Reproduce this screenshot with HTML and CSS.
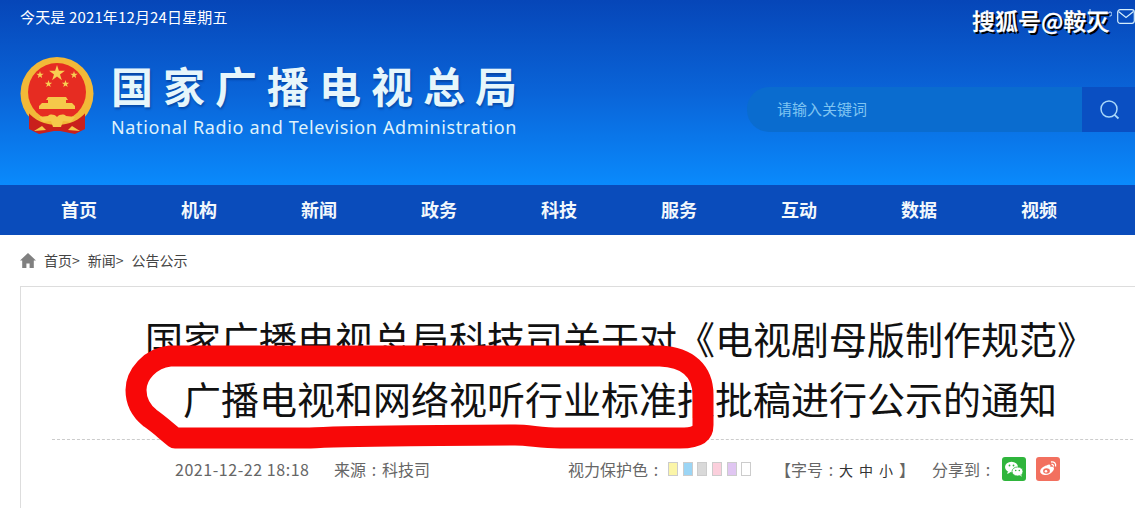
FILE: index.html
```html
<!DOCTYPE html>
<html lang="zh-CN">
<head>
  <meta charset="UTF-8">
  <title>国家广播电视总局</title>
  <link rel="stylesheet" href="styles.css">
</head>
<body>
  <div class="page">
    <header class="header">
      <div class="top-bar">
        <span class="date">今天是 2021年12月24日星期五</span>
        <div class="top-links">
          <svg class="top-mark" width="24" height="16" viewBox="0 0 24 16"><path d="M2 0v14M22 3a2 2 0 1 0 .1 0" fill="none" stroke="#cfeaff" stroke-width="1"/></svg>
          <svg class="mail-icon" width="18" height="15" viewBox="0 0 18 15"><rect x=".7" y=".7" width="16.6" height="13.6" rx="2.5" fill="none" stroke="#d5eefc" stroke-width="1.2"/><path d="M1.500 2.500 9 8.500l7.500-6" fill="none" stroke="#d5eefc" stroke-width="1.2"/></svg>
        </div>
      </div>
      <div class="header-main">
        <div class="logo">
          <svg class="emblem" width="74" height="78" viewBox="0 0 74 78">
            <circle cx="37" cy="36.500" r="36.500" fill="#f2b938"/>
            <circle cx="37" cy="35" r="29" fill="#e62c22"/>
            <path d="M37 8l1.900 5.800h6l-4.900 3.600 1.900 5.800-4.900-3.600-4.900 3.600 1.900-5.800-4.900-3.600h6z" fill="#f8cf52"/>
            <path d="M20 14l.9 2.700h2.800l-2.300 1.700.9 2.700-2.300-1.700-2.300 1.700.9-2.700-2.300-1.700h2.800zM54 14l.9 2.700h2.800l-2.300 1.700.9 2.700-2.300-1.700-2.300 1.700.9-2.700-2.300-1.700h2.800zM28.500 23l.9 2.700h2.800l-2.300 1.700.9 2.700-2.300-1.700-2.300 1.700.9-2.700-2.300-1.700h2.800zM45.500 23l.9 2.700h2.800l-2.300 1.700.9 2.700-2.300-1.700-2.300 1.700.9-2.700-2.300-1.700h2.800z" fill="#f8cf52"/>
            <path d="M28 40h18l2 3h-2v3h6l3 3v3H19v-3l3-3h6v-3h-2z" fill="#f5c94a"/>
            <path d="M9 54 22 62l15 4 15-4 13-8v18l-10 5-15-3h-6l-15 3-10-5z" fill="#c9201c"/>
            <path d="M9 50c6 8 17 13 28 13s22-5 28-13l2 4c-7 9-18 14-30 14S14 63 7 54z" fill="#f2b938"/>
            <path d="M37 60c3-3 7-3 9-1l9 1-4 5-8-1-2 6h-8l-2-6-8 1-4-5 9-1c2-2 6-2 9 1z" fill="#f5c94a"/>
            <path d="M14 74l8-5 4 4zM60 74l-8-5-4 4z" fill="#f5c94a"/>
          </svg>
          <div class="logo-text">
            <div class="logo-cn">国家广播电视总局</div>
            <div class="logo-en">National Radio and Television Administration</div>
          </div>
        </div>
        <form class="search">
          <input class="search-input" type="text" placeholder="请输入关键词">
          <div class="search-btn">
            <svg width="22" height="22" viewBox="0 0 22 22"><circle cx="10" cy="10" r="8" fill="none" stroke="#a9d8fa" stroke-width="1.500"/><path d="M15.500 15.800l4 3.700" stroke="#a9d8fa" stroke-width="1.800" fill="none"/></svg>
          </div>
        </form>
      </div>
      <div class="watermark">搜狐号@鞍灭</div>
    </header>

    <nav class="nav">
      <a>首页</a>
      <a>机构</a>
      <a>新闻</a>
      <a>政务</a>
      <a>科技</a>
      <a>服务</a>
      <a>互动</a>
      <a>数据</a>
      <a>视频</a>
    </nav>

    <div class="crumbs">
      <svg class="home-icon" width="16" height="15" viewBox="0 0 16 15"><path d="M8 0 0 7.500h2.200V15h4.200v-4.500h3.200V15h4.200V7.500H16z" fill="#808080"/></svg>
      <span>首页&gt;</span>
      <span>新闻&gt;</span>
      <span>公告公示</span>
    </div>

    <main class="card">
      <h1 class="title">国家广播电视总局科技司关于对《电视剧母版制作规范》<br>广播电视和网络视听行业标准报批稿进行公示的通知</h1>
      <div class="meta">
        <span class="meta-date">2021-12-22 18:18</span>
        <span class="meta-source">来源<span class="colon">:</span>科技司</span>
        <span class="meta-eye">视力保护色<span class="colon">:</span></span>
        <div class="swatches">
          <i class="swatch yellow"></i>
          <i class="swatch blue"></i>
          <i class="swatch gray"></i>
          <i class="swatch pink"></i>
          <i class="swatch purple"></i>
          <i class="swatch white"></i>
        </div>
        <span class="meta-size">【字号<span class="colon">:</span><b>大</b><b>中</b><b>小</b>】</span>
        <span class="meta-share">分享到<span class="colon">:</span></span>
        <a class="share wechat">
          <svg width="24" height="24" viewBox="0 0 24 24"><ellipse cx="9.500" cy="10" rx="6.500" ry="5.300" fill="#fff"/><path d="M6 14l-.8 3 3-1.600z" fill="#fff"/><ellipse cx="15.500" cy="14.500" rx="5.500" ry="4.500" fill="#fff" stroke="#2fb53c" stroke-width=".8"/><path d="M18 18l1.500 2-.2-3z" fill="#fff"/><circle cx="7.500" cy="8.500" r=".9" fill="#2fb53c"/><circle cx="11.500" cy="8.500" r=".9" fill="#2fb53c"/><circle cx="13.700" cy="13.500" r=".8" fill="#2fb53c"/><circle cx="17.300" cy="13.500" r=".8" fill="#2fb53c"/></svg>
        </a>
        <a class="share weibo">
          <svg width="24" height="24" viewBox="0 0 24 24"><path d="M10.500 8.500c3-1.700 4.500-.8 3.800 1.500 3-.8 4.700 1 3 3.500-1.600 3-5.500 5-8.800 4.500-3-.4-4.500-2-4.300-4 .2-2.200 3-4.700 6.300-5.500z" fill="#fff"/><ellipse cx="10.500" cy="14" rx="3.400" ry="2.700" fill="#f2705f"/><circle cx="10" cy="14.200" r="1.300" fill="#fff"/><path d="M15 5c3-.8 5.300 1.500 4.500 4.500M15.500 7.500c1.300-.3 2.200.7 1.800 2" fill="none" stroke="#fff" stroke-width="1.300"/></svg>
        </a>
      </div>
    </main>

    <svg class="red-loop" width="620" height="120" viewBox="0 0 620 120">
      <path d="M50 16L540 16C568 17 583 32 583 55L583 85C583 95 575 98 560 98L440 98C420 98 410 95 395 95C360 95 220 96 190 98L55 98C45 90 40 85 30 78C20 70 16 60 16 50C16 35 30 18 50 16Z" fill="none" stroke="#f80808" stroke-width="21" stroke-linejoin="round"/>
    </svg>
  </div>
</body>
</html>
```

FILE: styles.css
```css
* {
  box-sizing: border-box;
}
body {
  margin: 0;
  font-family: "Noto Sans CJK SC", "Noto Sans", sans-serif;
  background: #fff;
}
.page {
  position: relative;
  width: 1135px;
  height: 508px;
  overflow: hidden;
}

/* header */
.header {
  position: relative;
  height: 185px;
  background: linear-gradient(#0646b8, #0a64d8 50%, #0a8afc);
  overflow: hidden;
}
.top-bar {
  display: flex;
  justify-content: space-between;
  align-items: center;
  height: 35px;
  padding: 0 0 2px 20px;
  color: #fff;
}
.date {
  font-size: 15px;
  letter-spacing: 0.150px;
}
.top-links {
  display: flex;
  align-items: center;
}
.top-mark {
  margin: 0 5px 0 0;
}
.header-main {
  display: flex;
  justify-content: space-between;
  align-items: flex-start;
  padding-left: 20px;
}
.logo {
  display: flex;
  margin-top: 22px;
}
.emblem {
  flex: none;
}
.logo-text {
  margin-left: 17px;
}
.logo-cn {
  font-size: 42px;
  font-weight: 700;
  line-height: 56px;
  letter-spacing: 10px;
  color: #e6f6fb;
  text-shadow: 1px 2px 2px rgba(0, 40, 110, 0.45);
  white-space: nowrap;
}
.logo-en {
  margin-top: 1px;
  font-family: "Noto Sans", sans-serif;
  font-size: 18px;
  line-height: 26px;
  letter-spacing: 0.630px;
  color: #dff2fb;
  white-space: nowrap;
}
.search {
  display: flex;
  width: 408px;
  height: 45px;
  margin-top: 52px;
  margin-right: -20px;
}
.search-input {
  width: 335px;
  height: 45px;
  padding: 0 0 3px 30px;
  border: 0;
  border-radius: 22px 0 0 22px;
  outline: 0;
  background: #0a6ccf;
  font: 15px "Noto Sans CJK SC", sans-serif;
  color: #fff;
}
.search-input::placeholder {
  color: #7fc4f2;
  opacity: 1;
}
.search-btn {
  display: flex;
  align-items: center;
  flex: 1;
  padding-left: 17px;
  background: #0a4fc2;
}
.watermark {
  position: absolute;
  top: 4px;
  left: 972px;
  font-size: 23px;
  font-weight: 500;
  line-height: 32px;
  color: #fff;
  -webkit-text-stroke: 0.300px #fff;
  text-shadow: 2px 2px 0 #000;
  white-space: nowrap;
}

/* nav */
.nav {
  display: flex;
  height: 50px;
  padding-left: 19px;
  background: #0a4cbb;
}
.nav a {
  width: 120px;
  font-size: 18px;
  font-weight: 700;
  line-height: 48px;
  text-align: center;
  color: #f2f8fc;
}

/* breadcrumb */
.crumbs {
  display: flex;
  align-items: center;
  gap: 8px;
  height: 51px;
  padding: 0 0 1px 20px;
  font-size: 14px;
  color: #444;
}

/* article */
.card {
  height: 240px;
  margin-left: 20px;
  border: 1px solid #ddd;
  border-right: 0;
  border-bottom: 0;
}
.title {
  width: 1136px;
  margin: 21px 0 0 31px;
  padding-bottom: 11px;
  border-bottom: 1px dashed #ccc;
  font-size: 38px;
  font-weight: 400;
  line-height: 60px;
  text-align: center;
  color: #111;
  white-space: nowrap;
}
.meta {
  display: flex;
  align-items: center;
  height: 58px;
  padding-left: 154px;
  font-size: 16px;
  color: #666;
  white-space: nowrap;
}
.colon {
  display: inline-block;
  width: 16px;
  text-align: center;
}
.meta-date {
  width: 159px;
  letter-spacing: 0.550px;
}
.meta-source {
  width: 234px;
}
.meta-eye {
  width: 100px;
}
.swatches {
  display: flex;
  gap: 4.700px;
  width: 107px;
}
.swatch {
  width: 10px;
  height: 14px;
  border: 1px solid #ccc;
}
.yellow { background: #fbf5a8; }
.blue { background: #9bd5f5; }
.gray { background: #d9d9d9; }
.pink { background: #fbcfdc; }
.purple { background: #e0c6f2; }
.white { background: #fff; }
.meta-size {
  width: 157px;
}
.meta-size b {
  margin-right: 6px;
  font-size: 14px;
  font-weight: 400;
  color: #333;
}
.meta-share {
  width: 70px;
}
.share {
  display: block;
  width: 24px;
  height: 24px;
  margin-right: 10px;
  border-radius: 3px;
}
.wechat { background: #2fb53c; }
.weibo { background: #f2705f; }

/* hand drawn highlight on top of the title */
.red-loop {
  position: absolute;
  left: 120px;
  top: 340px;
}
```
